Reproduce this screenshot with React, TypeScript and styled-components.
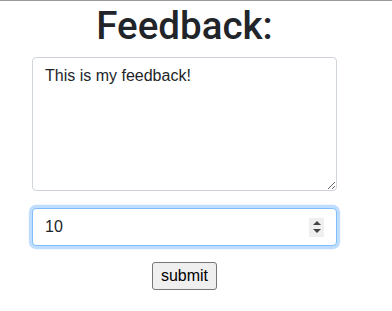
import React, { useState } from "react";
import styled, { createGlobalStyle } from "styled-components";

const GlobalStyle = createGlobalStyle`
  body {
    margin: 0;
    font-family: "Liberation Sans", Arial, sans-serif;
    color: #212529;
    background: #fff;
  }
`;

const Page = styled.div`
  border-top: 1px solid #999;
`;

const Form = styled.form`
  width: 369px;
  display: flex;
  flex-direction: column;
  align-items: center;
`;

const Title = styled.h1`
  margin: 1.5px 0 8px;
  font-family: Roboto, "Liberation Sans", sans-serif;
  font-size: 38.5px;
  font-weight: 500;
  line-height: 1.2;
  color: #212529;
`;

const FeedbackArea = styled.textarea`
  box-sizing: border-box;
  width: 305px;
  height: 134px;
  margin: 0 0 17px;
  padding: 6px 12px;
  font-family: inherit;
  font-size: 16px;
  line-height: 1.5;
  color: #212529;
  border: 1px solid #ced4da;
  border-radius: 4px;
  outline: none;
`;

const RatingField = styled.div`
  position: relative;
  margin: 0 0 16px;
`;

const RatingInput = styled.input`
  box-sizing: border-box;
  width: 305px;
  height: 38px;
  margin: 0;
  padding: 6px 12px;
  font-family: inherit;
  font-size: 16px;
  line-height: 1.5;
  color: #212529;
  border: 1px solid #80bdff;
  border-radius: 4px;
  box-shadow: 0 0 0 3.2px rgba(0, 123, 255, 0.25);
  outline: none;
  -moz-appearance: textfield;

  &::-webkit-inner-spin-button,
  &::-webkit-outer-spin-button {
    -webkit-appearance: none;
    margin: 0;
  }
`;

const Spinner = styled.div`
  position: absolute;
  top: 10px;
  right: 13px;
  width: 15px;
  height: 19px;
  background: #efefef;
  display: flex;
  flex-direction: column;
  align-items: center;
  justify-content: center;
  gap: 4px;
`;

const Arrow = styled.span<{ $up?: boolean }>`
  width: 0;
  height: 0;
  border-left: 4px solid transparent;
  border-right: 4px solid transparent;
  ${({ $up }) =>
    $up ? "border-bottom: 4px solid #444;" : "border-top: 4px solid #444;"}
`;

const SubmitButton = styled.button`
  font-family: inherit;
  font-size: 16px;
  line-height: 1.5;
  padding: 1px 8px;
  color: #000;
  background: #efefef;
  border: 1px solid #767676;
  border-radius: 3px;
`;

export default function App() {
  const [text, setText] = useState("This is my feedback!");
  const [rating, setRating] = useState(10);

  return (
    <Page>
      <GlobalStyle />
      <Form onSubmit={(e) => e.preventDefault()}>
        <Title>Feedback:</Title>
        <FeedbackArea value={text} onChange={(e) => setText(e.target.value)} />
        <RatingField>
          <RatingInput
            type="number"
            value={rating}
            onChange={(e) => setRating(Number(e.target.value))}
          />
          <Spinner>
            <Arrow $up onClick={() => setRating((r) => r + 1)} />
            <Arrow onClick={() => setRating((r) => r - 1)} />
          </Spinner>
        </RatingField>
        <SubmitButton type="submit">submit</SubmitButton>
      </Form>
    </Page>
  );
}
